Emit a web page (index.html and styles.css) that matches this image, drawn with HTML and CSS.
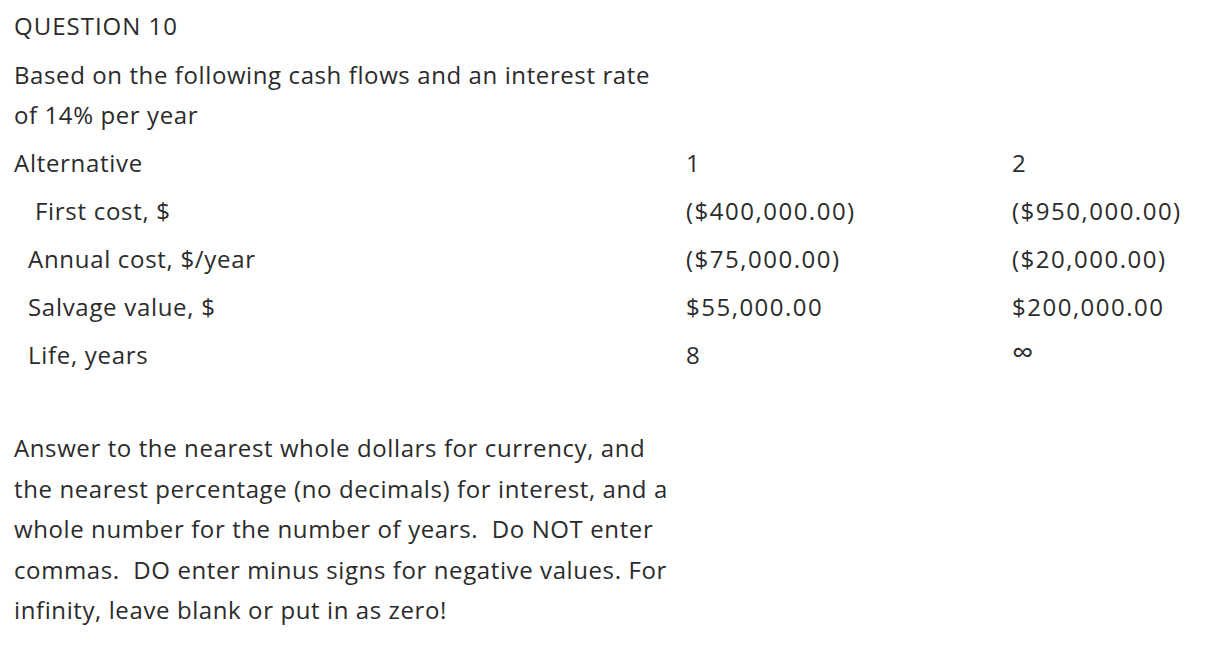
FILE: index.html
```html
<!DOCTYPE html>
<html>
<head>
<meta charset="utf-8">
<link rel="stylesheet" href="styles.css">
</head>
<body>
<div class="question">
  <div class="q-title">QUESTION 10</div>
  <p class="intro">Based on the following cash flows and an interest rate<br>of 14% per year</p>
  <div class="cash-table">
    <div class="row">
      <div class="label">Alternative</div>
      <div class="val">1</div>
      <div class="val">2</div>
    </div>
    <div class="row">
      <div class="label indent-a">First cost, $</div>
      <div class="val">($400,000.00)</div>
      <div class="val">($950,000.00)</div>
    </div>
    <div class="row">
      <div class="label indent-b">Annual cost, $/year</div>
      <div class="val">($75,000.00)</div>
      <div class="val">($20,000.00)</div>
    </div>
    <div class="row">
      <div class="label indent-b">Salvage value, $</div>
      <div class="val">$55,000.00</div>
      <div class="val">$200,000.00</div>
    </div>
    <div class="row">
      <div class="label indent-b">Life, years</div>
      <div class="val">8</div>
      <div class="val inf">∞</div>
    </div>
  </div>
  <p class="note">Answer to the nearest whole dollars for currency, and<br>the nearest percentage (no decimals) for interest, and a<br>whole number for the number of years.&nbsp; Do NOT enter<br>commas.&nbsp; DO enter minus signs for negative values. For<br>infinity, leave blank or put in as zero!</p>
</div>
</body>
</html>
```

FILE: styles.css
```css
html, body {
  margin: 0;
  padding: 0;
  background: #ffffff;
}

body {
  font-family: "Open Sans", sans-serif;
  font-size: 24px;
  letter-spacing: 0.6px;
  color: #2b2b2b;
}

.question {
  padding: 6px 0 0 14px;
}

.q-title {
  line-height: 40px;
  margin-bottom: 9px;
  letter-spacing: 1px;
}

.intro {
  margin: 0;
  line-height: 40px;
}

.cash-table {
  margin-top: 3px;
  display: flex;
  flex-direction: column;
}

.row {
  display: grid;
  grid-template-columns: 672px 326px 1fr;
  height: 48px;
  align-items: center;
}

.label {
  letter-spacing: 0.7px;
}

.val {
  letter-spacing: 1.5px;
}

.indent-a {
  padding-left: 21px;
}

.indent-b {
  padding-left: 14px;
}

.inf {
  font-size: 30px;
  line-height: 1;
  letter-spacing: 0;
  margin-top: -4px;
}

.note {
  margin: 50px 0 0;
  line-height: 40.5px;
}
```
